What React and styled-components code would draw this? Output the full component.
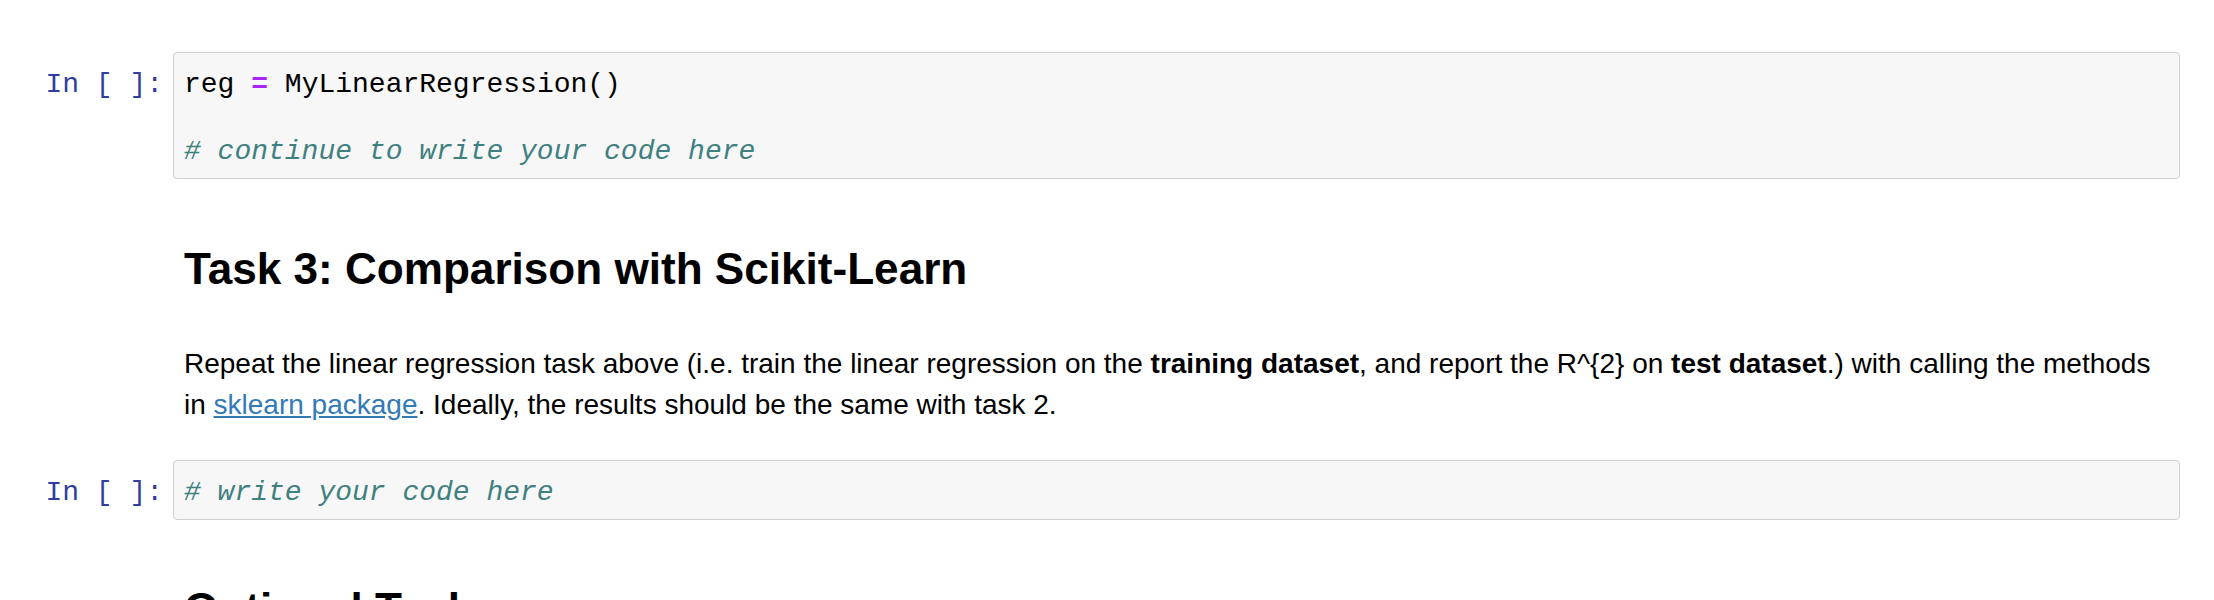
import React from "react";
import styled, { createGlobalStyle } from "styled-components";

const Global = createGlobalStyle`
  html, body { margin: 0; padding: 0; background: #fff; }
  body { font-family: "Liberation Sans", Arial, sans-serif; color: #000; }
`;

const Notebook = styled.div`
  display: flex;
  flex-direction: column;
  padding: 52px 34px 0 0;
  width: 2214px;
  box-sizing: border-box;
  height: 600px;
  overflow: hidden;
`;

const Row = styled.div`
  display: flex;
  align-items: flex-start;
  margin-bottom: ${(p) => p.$gap || 0}px;
`;

const Prompt = styled.div`
  flex: 0 0 173px;
  box-sizing: border-box;
  padding: 16px 10px 0 0;
  text-align: right;
  font-family: "Liberation Mono", "Courier New", monospace;
  font-size: 28px;
  line-height: 33.5px;
  color: #303f9f;
  white-space: pre;
`;

const CodeBox = styled.div`
  flex: 1;
  min-width: 0;
  background: #f7f7f7;
  border: 1px solid #cfcfcf;
  border-radius: 4px;
  padding: 15px 10px 9px 10px;
  font-family: "Liberation Mono", "Courier New", monospace;
  font-size: 28px;
  line-height: 33.5px;
  color: #000;
  white-space: pre;
`;

const Line = styled.div`
  min-height: 33.5px;
`;

const Op = styled.span`
  color: #aa22ff;
  font-weight: bold;
`;

const Comment = styled.span`
  color: #408080;
  font-style: italic;
`;

const Markdown = styled.div`
  flex: 1;
  min-width: 0;
  padding: 0 20px 0 11px;
`;

const Heading = styled.h2`
  margin: 0;
  font-family: "Liberation Sans", Arial, sans-serif;
  font-weight: bold;
  font-size: 44.1px;
  line-height: 53.8px;
  color: #000;
  margin-bottom: ${(p) => p.$after || 0}px;
`;

const Para = styled.p`
  margin: 0;
  font-family: "Liberation Sans", Arial, sans-serif;
  font-size: 28px;
  line-height: 40.5px;
  color: #000;
`;

const Link = styled.a`
  color: #337ab7;
  text-decoration: underline;
`;

function CodeCell({ gap, children }) {
  return (
    <Row $gap={gap}>
      <Prompt>In [ ]:</Prompt>
      <CodeBox>{children}</CodeBox>
    </Row>
  );
}

export default function App() {
  return (
    <>
      <Global />
      <Notebook>
        <CodeCell gap={63}>
          <Line>
            reg <Op>=</Op> MyLinearRegression()
          </Line>
          <Line />
          <Line>
            <Comment># continue to write your code here</Comment>
          </Line>
        </CodeCell>
        <Row $gap={35}>
          <Prompt />
          <Markdown>
            <Heading $after={49}>Task 3: Comparison with Scikit-Learn</Heading>
            <Para>
              Repeat the linear regression task above (i.e. train the linear regression on the{" "}
              <b>training dataset</b>, and report the R^{"{2}"} on <b>test dataset</b>.) with
              calling the methods in <Link href="#">sklearn package</Link>. Ideally, the results
              should be the same with task 2.
            </Para>
          </Markdown>
        </Row>
        <CodeCell gap={62}>
          <Line>
            <Comment># write your code here</Comment>
          </Line>
        </CodeCell>
        <Row>
          <Prompt />
          <Markdown>
            <Heading>Optional Task</Heading>
          </Markdown>
        </Row>
      </Notebook>
    </>
  );
}
